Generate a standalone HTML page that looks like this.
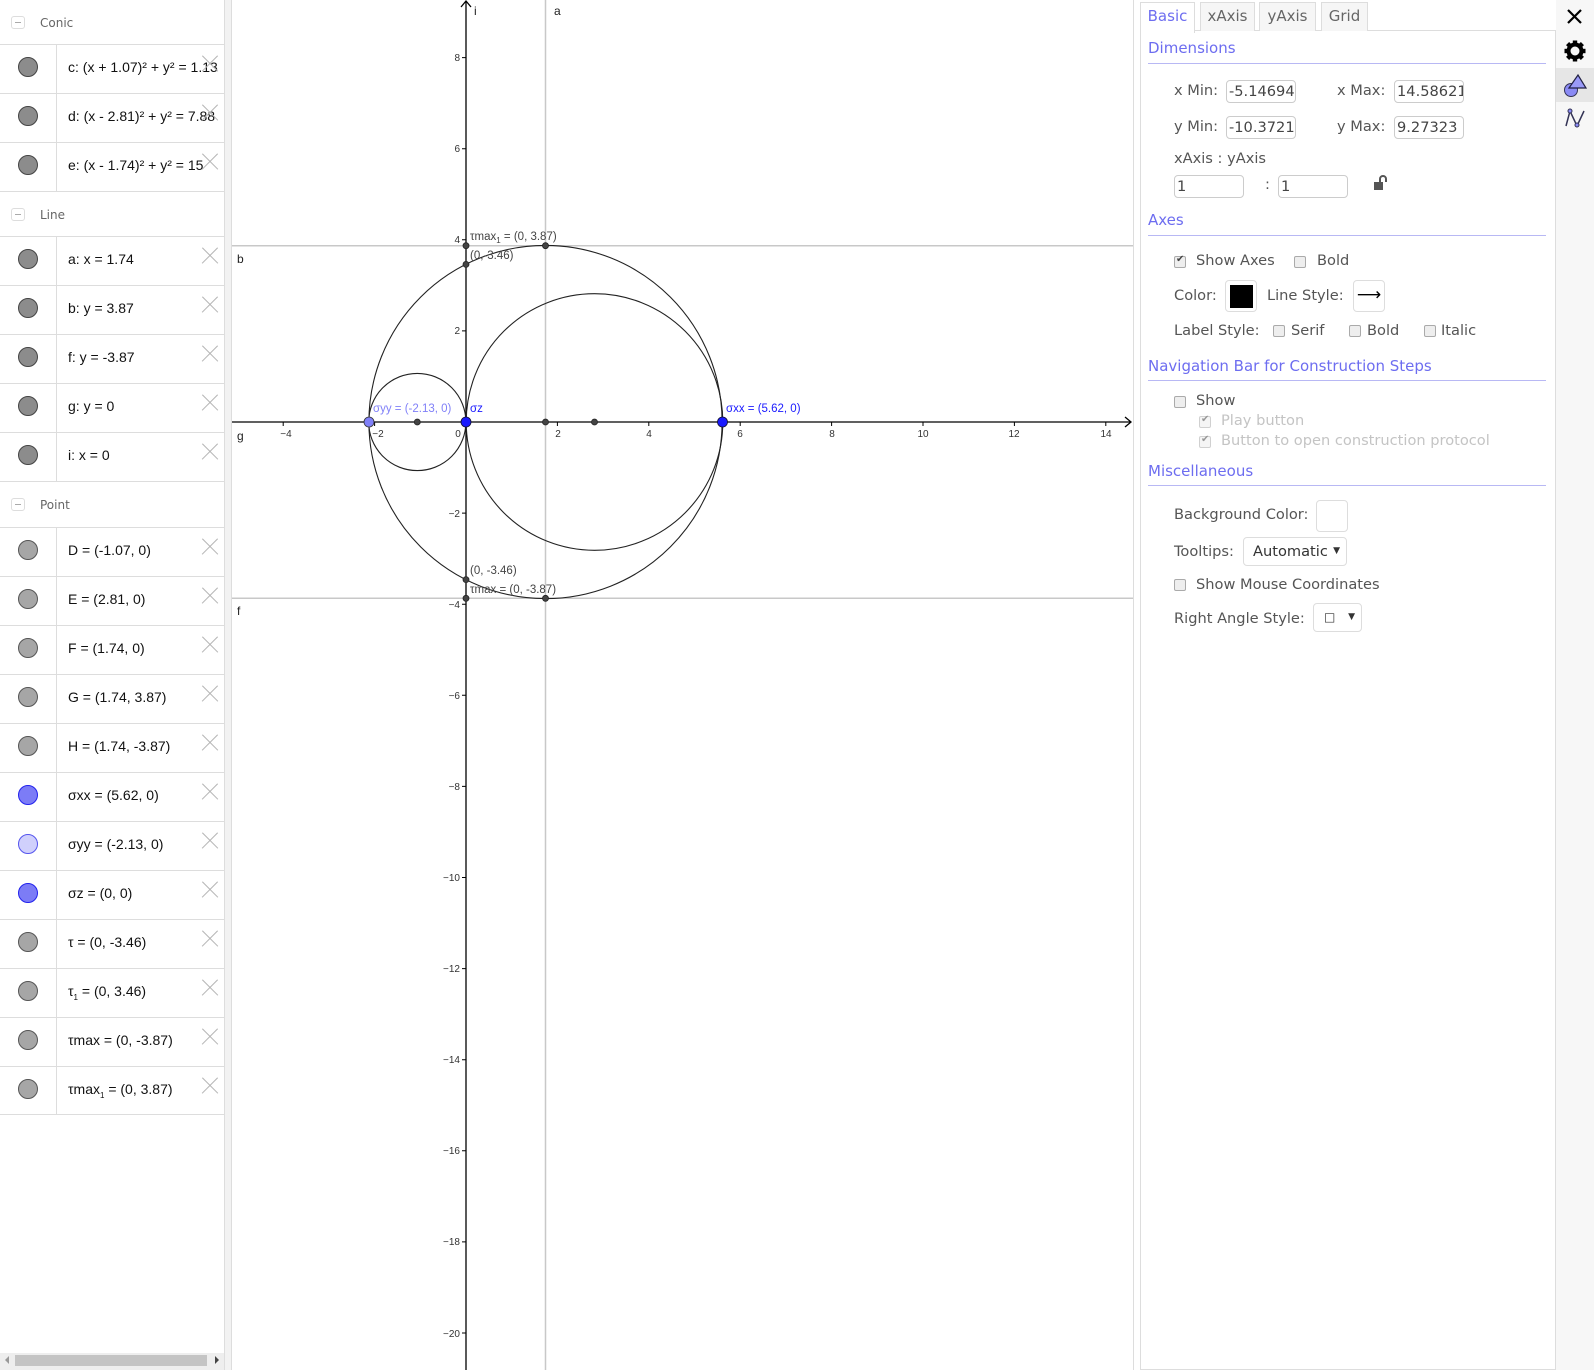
<!DOCTYPE html>
<html><head><meta charset="utf-8"><style>
*{box-sizing:border-box;margin:0;padding:0}
body{width:1594px;height:1370px;overflow:hidden;background:#fff;font-family:"Liberation Sans","DejaVu Sans",sans-serif;position:relative}
.abs{position:absolute}
#left{left:0;top:0;width:224px;height:1370px;background:#fff}
.hdr{position:absolute;left:0;width:224px;height:44px;font-size:12px;color:#666;font-family:"DejaVu Sans",sans-serif}
.hdr .mn{position:absolute;left:11px;top:16px;width:14px;height:13px;border:1px solid #ddd;border-radius:3px}
.hdr .mn:after{content:"";position:absolute;left:3px;top:5px;width:6px;height:1px;background:#aaa}
.hdr span{position:absolute;left:40px;top:16px}
.row{position:absolute;left:0;width:224px;height:49px;border-top:1px solid #ddd;overflow:hidden}
.row .ic{position:absolute;left:0;top:0;width:57px;height:48px;border-right:1px solid #ddd}
.row .dot{position:absolute;left:18px;top:12px;width:20px;height:20px;border-radius:50%;background:#8c8c8c;border:1px solid #444}
.row .dot.lt{background:#a6a6a6;border-color:#555}
.row .tx{position:absolute;left:68px;top:14px;font-size:14px;color:#111;white-space:nowrap;font-family:"Liberation Sans",sans-serif}
.row .x{position:absolute;left:202px;top:11px;width:16px;height:16px}
.row .x:before,.row .x:after{content:"";position:absolute;left:-3px;top:7px;width:22px;height:1.3px;background:#b4b4b4;transform:rotate(45deg)}
.row .x:after{transform:rotate(-45deg)}
#rp{left:1140px;top:0;width:416px;height:1370px;font-family:"DejaVu Sans",sans-serif;font-size:14.6px;color:#555}
.tab{position:absolute;top:2px;height:29px;border:1px solid #ddd;border-bottom:none;background:#f6f6f6;font-size:15px;color:#666;text-align:center;line-height:27px}
.sh{position:absolute;left:8px;font-size:15px;color:#6d6df0}
.ul{position:absolute;left:8px;width:398px;height:1px;background:#b8b8f4}
.lb{position:absolute;white-space:nowrap}
.inp{position:absolute;height:23px;border:1px solid #ccc;border-radius:4px;background:#fff;font-size:14.6px;color:#444;padding-left:2px;line-height:21px;overflow:hidden;white-space:nowrap}
.cb{position:absolute;width:12px;height:12px;border:1px solid #aaa;border-radius:2px;background:#eee}
.cb.ck:after{content:"✔";position:absolute;left:1px;top:-3px;font-size:10px;color:#444}
.cb.dis{opacity:.55}
</style></head><body>

<div id="left" class="abs">
 <div class="hdr" style="top:0"><div class="mn"></div><span>Conic</span></div>
 <div class="row" style="top:44px"><div class="ic"><div class="dot"></div></div><div class="tx">c: (x + 1.07)² + y² = 1.13</div><div class="x"></div></div>
 <div class="row" style="top:93px"><div class="ic"><div class="dot"></div></div><div class="tx">d: (x - 2.81)² + y² = 7.88</div><div class="x"></div></div>
 <div class="row" style="top:142px"><div class="ic"><div class="dot"></div></div><div class="tx">e: (x - 1.74)² + y² = 15</div><div class="x"></div></div>
 <div class="hdr" style="top:191px;border-top:1px solid #ddd"><div class="mn"></div><span>Line</span></div>
 <div class="row" style="top:236px"><div class="ic"><div class="dot"></div></div><div class="tx">a: x = 1.74</div><div class="x"></div></div>
 <div class="row" style="top:285px"><div class="ic"><div class="dot"></div></div><div class="tx">b: y = 3.87</div><div class="x"></div></div>
 <div class="row" style="top:334px"><div class="ic"><div class="dot"></div></div><div class="tx">f: y = -3.87</div><div class="x"></div></div>
 <div class="row" style="top:383px"><div class="ic"><div class="dot"></div></div><div class="tx">g: y = 0</div><div class="x"></div></div>
 <div class="row" style="top:432px"><div class="ic"><div class="dot"></div></div><div class="tx">i: x = 0</div><div class="x"></div></div>
 <div class="hdr" style="top:481px;border-top:1px solid #ddd"><div class="mn"></div><span>Point</span></div>
 <div class="row" style="top:527px"><div class="ic"><div class="dot lt"></div></div><div class="tx">D = (-1.07, 0)</div><div class="x"></div></div>
 <div class="row" style="top:576px"><div class="ic"><div class="dot lt"></div></div><div class="tx">E = (2.81, 0)</div><div class="x"></div></div>
 <div class="row" style="top:625px"><div class="ic"><div class="dot lt"></div></div><div class="tx">F = (1.74, 0)</div><div class="x"></div></div>
 <div class="row" style="top:674px"><div class="ic"><div class="dot lt"></div></div><div class="tx">G = (1.74, 3.87)</div><div class="x"></div></div>
 <div class="row" style="top:723px"><div class="ic"><div class="dot lt"></div></div><div class="tx">H = (1.74, -3.87)</div><div class="x"></div></div>
 <div class="row" style="top:772px"><div class="ic"><div class="dot" style="background:#7c7cf6;border-color:#2222ee"></div></div><div class="tx">σxx = (5.62, 0)</div><div class="x"></div></div>
 <div class="row" style="top:821px"><div class="ic"><div class="dot" style="background:#d0d0fc;border-color:#5555ee"></div></div><div class="tx">σyy = (-2.13, 0)</div><div class="x"></div></div>
 <div class="row" style="top:870px"><div class="ic"><div class="dot" style="background:#7c7cf6;border-color:#2222ee"></div></div><div class="tx">σz = (0, 0)</div><div class="x"></div></div>
 <div class="row" style="top:919px"><div class="ic"><div class="dot lt"></div></div><div class="tx">τ = (0, -3.46)</div><div class="x"></div></div>
 <div class="row" style="top:968px"><div class="ic"><div class="dot lt"></div></div><div class="tx">τ<sub style="font-size:8px">1</sub> = (0, 3.46)</div><div class="x"></div></div>
 <div class="row" style="top:1017px"><div class="ic"><div class="dot lt"></div></div><div class="tx">τmax = (0, -3.87)</div><div class="x"></div></div>
 <div class="row" style="top:1066px;border-bottom:1px solid #ddd"><div class="ic"><div class="dot lt"></div></div><div class="tx">τmax<sub style="font-size:8px">1</sub> = (0, 3.87)</div><div class="x"></div></div>
 <div class="abs" style="left:0;top:1353px;width:224px;height:17px;background:#eee"></div>
 <div class="abs" style="left:15px;top:1355px;width:192px;height:11px;background:#c4c4c4"></div>
 <div class="abs" style="left:5px;top:1356px;width:0;height:0;border-top:4px solid transparent;border-bottom:4px solid transparent;border-right:4px solid #999"></div>
 <div class="abs" style="left:215px;top:1356px;width:0;height:0;border-top:4px solid transparent;border-bottom:4px solid transparent;border-left:4px solid #444"></div>
</div>
<div class="abs" style="left:224px;top:0;width:8px;height:1370px;background:#f2f2f2;border-left:1px solid #ddd;border-right:1px solid #ddd"></div>

<svg class="abs" style="left:0;top:0" width="1140" height="1370" font-family="Liberation Sans, sans-serif">
 <g stroke="#c8c8c8" stroke-width="1.5">
  <line x1="545.5" y1="0" x2="545.5" y2="1370"/>
  <line x1="232" y1="245.7" x2="1133" y2="245.7"/>
  <line x1="232" y1="598.3" x2="1133" y2="598.3"/>
 </g>
 <line x1="1133.5" y1="0" x2="1133.5" y2="1370" stroke="#ddd"/>
 <g stroke="#000" stroke-width="1.3">
  <line x1="232" y1="422" x2="1131" y2="422"/>
  <polyline points="1125,417 1131,422 1125,427" fill="none"/>
  <line x1="466" y1="1370" x2="466" y2="1"/>
  <polyline points="461,7 466,1 471,7" fill="none"/>
 </g>
 <g stroke="#000" stroke-width="1">
  <path d="M283.2 422v4M374.6 422v4M557.4 422v4M648.8 422v4M740.2 422v4M831.6 422v4M923 422v4M1014.4 422v4M1105.8 422v4"/>
  <path d="M466 57.6h-4M466 148.7h-4M466 239.8h-4M466 330.9h-4M466 513.1h-4M466 604.2h-4M466 695.3h-4M466 786.4h-4M466 877.5h-4M466 968.6h-4M466 1059.7h-4M466 1150.8h-4M466 1241.9h-4M466 1333h-4"/>
 </g>
 <g font-size="10" fill="#333" text-anchor="middle">
  <text x="286" y="437">−4</text><text x="378" y="437">−2</text><text x="458" y="437">0</text>
  <text x="558" y="437">2</text><text x="649" y="437">4</text><text x="740" y="437">6</text><text x="832" y="437">8</text>
  <text x="923" y="437">10</text><text x="1014" y="437">12</text><text x="1106" y="437">14</text>
 </g>
 <g font-size="10" fill="#333" text-anchor="end">
  <text x="460" y="61">8</text><text x="460" y="152">6</text><text x="460" y="243">4</text><text x="460" y="334">2</text>
  <text x="460" y="517">−2</text><text x="460" y="608">−4</text><text x="460" y="699">−6</text><text x="460" y="790">−8</text>
  <text x="460" y="881">−10</text><text x="460" y="972">−12</text><text x="460" y="1063">−14</text><text x="460" y="1154">−16</text>
  <text x="460" y="1245">−18</text><text x="460" y="1337">−20</text>
 </g>
 <g font-size="12" fill="#222"><text x="474" y="15">i</text><text x="554" y="15">a</text><text x="237" y="263">b</text><text x="237" y="615">f</text><text x="237" y="440">g</text></g>
 <g fill="none" stroke="#222" stroke-width="1.1">
  <circle cx="417.3" cy="422" r="48.6"/>
  <circle cx="594.5" cy="422" r="128.3"/>
  <circle cx="545.5" cy="422" r="176.6"/>
 </g>
 <g fill="#444" stroke="#222" stroke-width=".8">
  <circle cx="466" cy="264.4" r="3"/><circle cx="466" cy="579.6" r="3"/>
  <circle cx="466" cy="245.7" r="3"/><circle cx="466" cy="598.3" r="3"/>
  <circle cx="545.5" cy="245.7" r="3"/><circle cx="545.5" cy="598.3" r="3"/>
  <circle cx="417.3" cy="422" r="3"/><circle cx="545.5" cy="422" r="3"/><circle cx="594.5" cy="422" r="3"/>
 </g>
 <circle cx="369" cy="422" r="5" fill="#8080f8" stroke="#333" stroke-width=".8"/>
 <circle cx="466" cy="422" r="5" fill="#1a1aff" stroke="#113" stroke-width=".8"/>
 <circle cx="722.5" cy="422" r="5" fill="#1a1aff" stroke="#113" stroke-width=".8"/>
 <g font-size="11.5" fill="#444">
  <text x="470" y="240">τmax<tspan font-size="8" dy="3">1</tspan><tspan dy="-3"> = (0, 3.87)</tspan></text>
  <text x="470" y="259">(0,-3.46)</text>
  <text x="470" y="574">(0, -3.46)</text>
  <text x="470" y="593">τmax = (0, -3.87)</text>
 </g>
 <text x="373" y="412" font-size="11.5" fill="#8080f8">σyy = (-2.13, 0)</text>
 <text x="470" y="412" font-size="11.5" fill="#1a1aff">σz</text>
 <text x="726" y="412" font-size="11.5" fill="#1a1aff">σxx = (5.62, 0)</text>
</svg>

<div id="rp" class="abs">
 <div class="abs" style="left:0;top:30px;width:416px;height:1340px;border:1px solid #ddd;background:#fff"></div>
 <div class="tab" style="left:0;width:55px;background:#fff;color:#6d6df0;height:31px">Basic</div>
 <div class="tab" style="left:60px;width:55px">xAxis</div>
 <div class="tab" style="left:119px;width:57px">yAxis</div>
 <div class="tab" style="left:181px;width:47px">Grid</div>

 <div class="sh" style="top:39px">Dimensions</div><div class="ul" style="top:63px"></div>
 <div class="lb" style="left:34px;top:82px">x Min:</div><div class="inp" style="left:86px;top:80px;width:70px">-5.14694</div>
 <div class="lb" style="left:197px;top:82px">x Max:</div><div class="inp" style="left:254px;top:80px;width:70px">14.58621</div>
 <div class="lb" style="left:34px;top:118px">y Min:</div><div class="inp" style="left:86px;top:116px;width:70px">-10.3721</div>
 <div class="lb" style="left:197px;top:118px">y Max:</div><div class="inp" style="left:254px;top:116px;width:70px">9.27323</div>
 <div class="lb" style="left:34px;top:150px">xAxis : yAxis</div>
 <div class="inp" style="left:34px;top:175px;width:70px">1</div>
 <div class="lb" style="left:125px;top:176px">:</div>
 <div class="inp" style="left:138px;top:175px;width:70px">1</div>
 <svg class="abs" style="left:232px;top:175px" width="18" height="18"><rect x="2" y="7" width="9" height="8" fill="#555"/><path d="M8 7V4a3 3 0 0 1 6 0v3" fill="none" stroke="#555" stroke-width="2"/></svg>

 <div class="sh" style="top:211px">Axes</div><div class="ul" style="top:235px"></div>
 <div class="cb ck" style="left:34px;top:256px"></div><div class="lb" style="left:56px;top:252px">Show Axes</div>
 <div class="cb" style="left:154px;top:256px"></div><div class="lb" style="left:177px;top:252px">Bold</div>
 <div class="lb" style="left:34px;top:287px">Color:</div>
 <div class="abs" style="left:85px;top:280px;width:32px;height:32px;border:1px solid #ddd;border-radius:4px;background:#fff"><div style="margin:4px;width:23px;height:23px;background:#000"></div></div>
 <div class="lb" style="left:127px;top:287px">Line Style:</div>
 <div class="abs" style="left:213px;top:280px;width:32px;height:32px;border:1px solid #ddd;border-radius:4px;text-align:center;line-height:28px;color:#000;font-size:17px">⟶</div>
 <div class="lb" style="left:34px;top:322px">Label Style:</div>
 <div class="cb" style="left:133px;top:325px"></div><div class="lb" style="left:151px;top:322px">Serif</div>
 <div class="cb" style="left:209px;top:325px"></div><div class="lb" style="left:227px;top:322px">Bold</div>
 <div class="cb" style="left:284px;top:325px"></div><div class="lb" style="left:301px;top:322px">Italic</div>

 <div class="sh" style="top:357px">Navigation Bar for Construction Steps</div><div class="ul" style="top:380px"></div>
 <div class="cb" style="left:34px;top:396px"></div><div class="lb" style="left:56px;top:392px">Show</div>
 <div class="cb ck dis" style="left:59px;top:416px"></div><div class="lb" style="left:81px;top:412px;color:#c4c4c4">Play button</div>
 <div class="cb ck dis" style="left:59px;top:436px"></div><div class="lb" style="left:81px;top:432px;color:#c4c4c4">Button to open construction protocol</div>

 <div class="sh" style="top:462px">Miscellaneous</div><div class="ul" style="top:485px"></div>
 <div class="lb" style="left:34px;top:506px">Background Color:</div>
 <div class="abs" style="left:176px;top:500px;width:32px;height:32px;border:1px solid #ddd;border-radius:4px"></div>
 <div class="lb" style="left:34px;top:543px">Tooltips:</div>
 <div class="abs" style="left:103px;top:537px;width:104px;height:29px;border:1px solid #ddd;border-radius:4px;padding-left:9px;line-height:27px;color:#333">Automatic <span style="position:absolute;right:6px;font-size:9px">▼</span></div>
 <div class="cb" style="left:34px;top:579px"></div><div class="lb" style="left:56px;top:576px">Show Mouse Coordinates</div>
 <div class="lb" style="left:34px;top:610px">Right Angle Style:</div>
 <div class="abs" style="left:173px;top:603px;width:49px;height:29px;border:1px solid #ddd;border-radius:4px;padding-left:10px;line-height:27px;color:#333;font-size:12px">□ <span style="position:absolute;right:6px;font-size:9px">▼</span></div>
</div>

<div class="abs" style="left:1556px;top:0;width:38px;height:1370px;background:#f7f7f7"></div>
<svg class="abs" style="left:1556px;top:0" width="38" height="140">
 <path d="M12 10l13 13M25 10L12 23" stroke="#000" stroke-width="2.2"/>
 <g transform="translate(19,51)"><circle r="6.5" fill="none" stroke="#000" stroke-width="4"/>
  <g fill="#000"><rect x="-2.2" y="-10.5" width="4.4" height="5"/><rect x="-2.2" y="5.5" width="4.4" height="5"/><rect x="-10.5" y="-2.2" width="5" height="4.4"/><rect x="5.5" y="-2.2" width="5" height="4.4"/>
  <g transform="rotate(45)"><rect x="-2.2" y="-10.5" width="4.4" height="5"/><rect x="-2.2" y="5.5" width="4.4" height="5"/><rect x="-10.5" y="-2.2" width="5" height="4.4"/><rect x="5.5" y="-2.2" width="5" height="4.4"/></g></g></g>
 <rect x="0" y="68" width="38" height="34" fill="#e6e6e6"/>
 <circle cx="15" cy="90" r="6.5" fill="#8a8af4" stroke="#335" stroke-width="1"/>
 <path d="M13 88L22 75L30 88Z" fill="#9a9af8" stroke="#224" stroke-width="1.2"/>
 <path d="M10 126L14 111L21 126L28 111" fill="none" stroke="#335" stroke-width="1.5"/>
 <circle cx="14" cy="111" r="2" fill="#8a8af4" stroke="#335"/><circle cx="21" cy="125" r="2" fill="#8a8af4" stroke="#335"/>
</svg>
</body></html>
